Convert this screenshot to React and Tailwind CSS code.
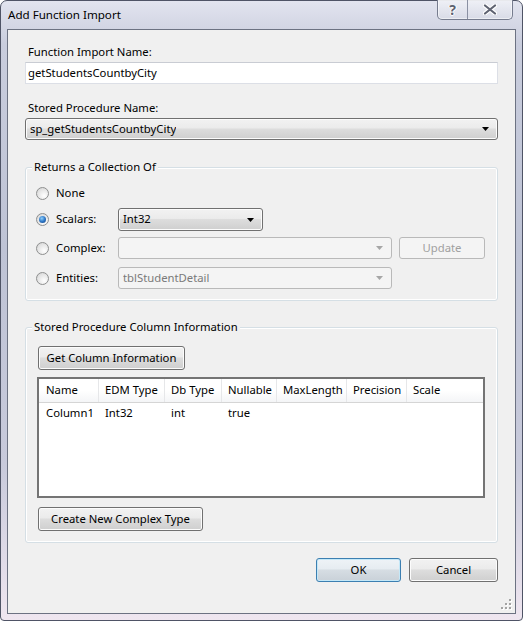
import React from "react";

// Windows 7 style "Add Function Import" dialog

const btnFace =
  "bg-[linear-gradient(#f2f2f2_0%,#ebebeb_45%,#dddddd_50%,#cfcfcf_100%)] shadow-[inset_0_0_0_1px_#fcfcfc]";

function Arrow({ disabled }) {
  return (
    <svg width="7" height="4" viewBox="0 0 7 4" className="shrink-0">
      <path d="M0 0h7L3.5 4z" fill={disabled ? "#a6a6a6" : "#000"} />
    </svg>
  );
}

function Combo({ value, width, disabled }) {
  return (
    <div
      className={
        "flex items-center justify-between h-[22px] rounded-[3px] border pl-[4px] pr-[8px] " +
        width +
        " " +
        (disabled ? "border-[#b9b9b9] bg-[#f4f4f4] text-[#7a7a7a]" : "border-[#707070] text-black " + btnFace)
      }
    >
      <span className="truncate">{value}</span>
      <Arrow disabled={disabled} />
    </div>
  );
}

function Button({ children, className, disabled, isDefault }) {
  return (
    <div
      className={
        "flex items-center justify-center rounded-[3px] border " +
        (disabled
          ? "border-[#b9b9b9] bg-[#f4f4f4] text-[#a0a0a0] "
          : isDefault
          ? "border-[#3c7fb1] text-black bg-[linear-gradient(#eef3f7_0%,#e6ecf1_45%,#d6dde3_50%,#c9d1d8_100%)] shadow-[inset_0_0_0_1px_#c4e8f8] "
          : "border-[#707070] text-black " + btnFace + " ") +
        className
      }
    >
      {children}
    </div>
  );
}

function Radio({ checked }) {
  return (
    <span className="flex items-center justify-center w-[13px] h-[13px] shrink-0 rounded-full border border-[#8e8f8f] bg-[radial-gradient(circle_at_65%_70%,#ffffff_0%,#e4e4e4_60%,#cfcfcf_100%)]">
      {checked && (
        <span className="w-[7px] h-[7px] rounded-full bg-[radial-gradient(circle_at_40%_35%,#8fd0fb_0%,#2f78c8_50%,#123f7c_100%)]" />
      )}
    </span>
  );
}

function RadioRow({ label, checked, children, className }) {
  return (
    <div className={"flex items-center pl-[10px] " + className}>
      <Radio checked={checked} />
      <span className="ml-[7px] w-[62px] shrink-0">{label}</span>
      {children}
    </div>
  );
}

function GroupBox({ title, children, className }) {
  return (
    <div className={"rounded-[3px] border border-[#d5dfe5] shadow-[inset_0_0_0_1px_#ffffff] " + className}>
      <div className="-mt-[9px] ml-[6px] px-[2px] w-fit h-[16px] leading-[16px] bg-[#f0f0f0]">{title}</div>
      {children}
    </div>
  );
}

const columns = [
  { name: "Name", w: "w-[60px]" },
  { name: "EDM Type", w: "w-[66px]" },
  { name: "Db Type", w: "w-[57px]" },
  { name: "Nullable", w: "w-[55px]" },
  { name: "MaxLength", w: "w-[70px]" },
  { name: "Precision", w: "w-[60px]" },
  { name: "Scale", w: "flex-1" },
];

const rows = [["Column1", "Int32", "int", "true", "", "", ""]];

function CaptionButtons() {
  return (
    <div className="flex -mt-[1px] mr-[3px] h-[20px] rounded-b-[5px] border border-t-0 border-[#767c8e] bg-[linear-gradient(#f2f3f8cc,#d8dbe6aa)] shadow-[inset_0_0_0_1px_#ffffff80]">
      <div className="flex items-center justify-center w-[30px] border-r border-[#8a90a2]">
        <span className="text-[14px] leading-none font-bold text-[#5d6170] [text-shadow:0_0_1px_#fff,1px_0_0_#fff,-1px_0_0_#fff,0_1px_0_#fff]">
          ?
        </span>
      </div>
      <div className="flex items-center justify-center w-[44px]">
        <svg width="14" height="11" viewBox="0 0 14 11">
          <path d="M2 1.5L12 9.5M12 1.5L2 9.5" stroke="#ffffff" strokeWidth="4.2" strokeLinecap="round" />
          <path d="M2 1.5L12 9.5M12 1.5L2 9.5" stroke="#5f6372" strokeWidth="2.2" strokeLinecap="round" />
        </svg>
      </div>
    </div>
  );
}

function SizeGrip() {
  const dots = [
    [8, 0],
    [4, 4],
    [8, 4],
    [0, 8],
    [4, 8],
    [8, 8],
  ];
  return (
    <svg width="11" height="11" viewBox="0 0 11 11" className="absolute right-[3px] bottom-[3px]">
      {dots.map(([x, y], i) => (
        <g key={i}>
          <rect x={x + 1} y={y + 1} width="2" height="2" fill="#ffffff" />
          <rect x={x} y={y} width="2" height="2" fill="#a3a3a3" />
        </g>
      ))}
    </svg>
  );
}

export default function App() {
  return (
    <div className="w-[523px] h-[621px] flex flex-col px-[6px] pb-[6px] rounded-t-[7px] rounded-b-[4px] border border-[#4f5466] bg-[linear-gradient(#e2e4ef_0%,#c9cddd_7%,#bec3d5_40%,#c8cadb_75%,#efe6f0_100%)] text-[11.3px] text-black font-['Segoe_UI','Noto_Sans',sans-serif]">
      {/* Title bar */}
      <div className="flex items-start justify-between h-[28px]">
        <div className="pl-[1px] pt-[6px] leading-[16px] text-[11.6px]">Add Function Import</div>
        <CaptionButtons />
      </div>

      {/* Client area */}
      <div className="relative flex-1 flex flex-col px-[17px] border border-[#6c7282] bg-[#f0f0f0]">
        <div className="mt-[14px] h-[16px] leading-[16px] pl-[3px]">Function Import Name:</div>
        <div className="mt-[2px] h-[22px] flex items-center pl-[2px] bg-white border border-[#dcdfe6] border-t-[#c9ccd3]">
          getStudentsCountbyCity
        </div>

        <div className="mt-[16px] h-[16px] leading-[16px] pl-[3px]">Stored Procedure Name:</div>
        <div className="mt-[2px]">
          <Combo value="sp_getStudentsCountbyCity" width="w-full" />
        </div>

        <GroupBox title="Returns a Collection Of" className="mt-[27px] pb-[11px]">
          <RadioRow label="None" className="mt-[10px] h-[16px]" />
          <RadioRow label="Scalars:" checked className="mt-[7px] h-[23px]">
            <Combo value="Int32" width="w-[145px] h-[23px]" />
          </RadioRow>
          <RadioRow label="Complex:" className="mt-[6px] h-[22px]">
            <Combo value="" width="w-[274px]" disabled />
            <Button disabled className="ml-[7px] w-[86px] h-[22px]">
              Update
            </Button>
          </RadioRow>
          <RadioRow label="Entities:" className="mt-[8px] h-[22px]">
            <Combo value="tblStudentDetail" width="w-[274px]" disabled />
          </RadioRow>
        </GroupBox>

        <GroupBox title="Stored Procedure Column Information" className="mt-[26px] pb-[11px]">
          <Button className="mt-[11px] ml-[12px] w-[147px] h-[24px]">Get Column Information</Button>

          <div className="mt-[7px] ml-[11px] w-[448px] h-[121px] border-2 border-[#747474] bg-white">
            <div className="flex h-[24px] border-b border-[#d5d5d5] bg-[linear-gradient(#ffffff_0%,#ffffff_50%,#f4f5f7_100%)]">
              {columns.map((c, i) => (
                <div
                  key={c.name}
                  className={
                    c.w +
                    " flex items-center " +
                    (i === 0 ? "pl-[7px] " : "pl-[6px] ") +
                    (i < columns.length - 1 ? "border-r border-[#e6e7e9]" : "")
                  }
                >
                  {c.name}
                </div>
              ))}
            </div>
            {rows.map((r, ri) => (
              <div key={ri} className="flex h-[21px]">
                {columns.map((c, i) => (
                  <div
                    key={c.name}
                    className={
                      c.w +
                      " flex items-center " +
                      (i === 0 ? "pl-[7px] " : "pl-[6px] ") +
                      (i < columns.length - 1 ? "border-r border-transparent" : "")
                    }
                  >
                    {r[i]}
                  </div>
                ))}
              </div>
            ))}
          </div>

          <Button className="mt-[9px] ml-[12px] w-[165px] h-[24px]">Create New Complex Type</Button>
        </GroupBox>

        <div className="mt-[15px] flex justify-end gap-[8px]">
          <Button isDefault className="w-[85px] h-[24px]">
            OK
          </Button>
          <Button className="w-[89px] h-[24px]">Cancel</Button>
        </div>

        <SizeGrip />
      </div>
    </div>
  );
}
